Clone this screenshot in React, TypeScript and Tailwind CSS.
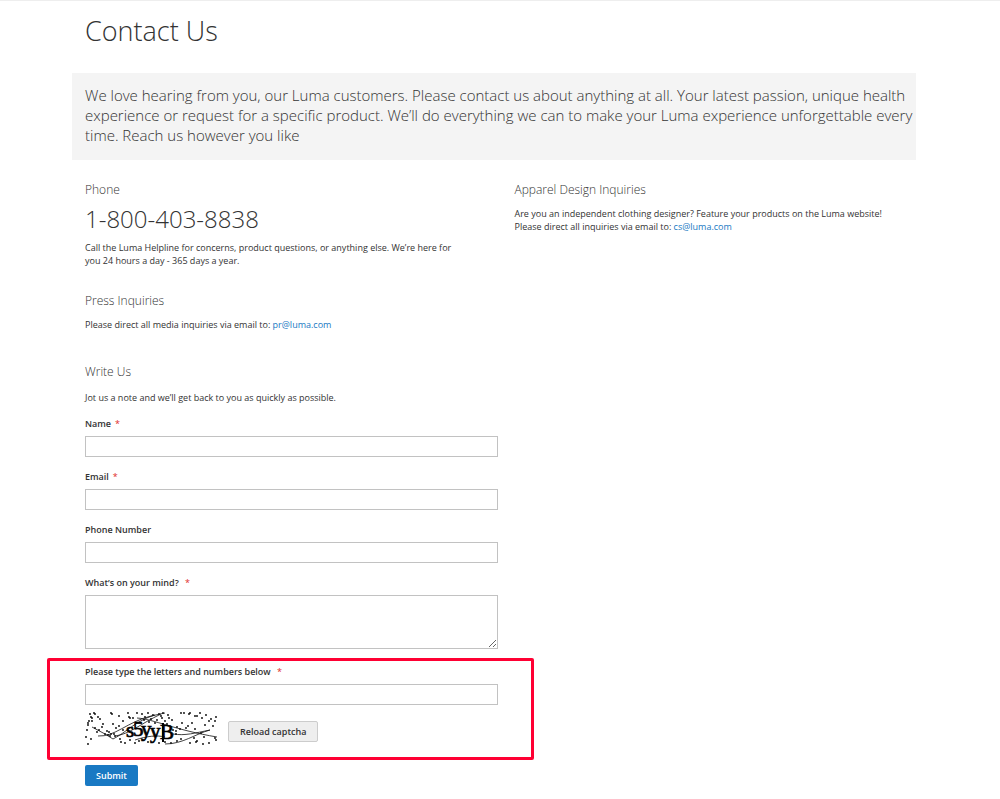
import { useState } from 'react';

const CAPTCHA_DOTS = [
  [5, 2], [9, 1], [10, 2], [13, 5], [15, 7], [6, 5], [7, 6], [4, 9], [3, 11], [7, 9], [18, 12], [26, 1], [27, 2], [34, 4],
  [43, 1], [44, 5], [45, 6], [52, 1], [57, 2], [28, 12], [38, 9], [3, 13], [10, 16], [2, 18], [17, 15], [24, 20], [31, 16],
  [1, 25], [6, 27], [12, 20], [22, 19], [3, 32], [36, 30], [40, 31], [35, 27], [45, 28], [50, 31], [63, 30], [14, 18],
  [26, 22], [20, 22], [23, 23], [25, 24], [29, 22], [30, 24], [34, 14], [38, 18], [54, 29], [48, 6], [59, 8],
  [63, 1], [68, 3], [74, 2], [78, 1], [84, 6], [83, 3], [87, 8], [96, 1], [99, 1], [104, 2], [105, 1], [110, 4], [115, 1],
  [121, 3], [126, 7], [131, 5], [117, 6], [112, 4], [124, 9], [130, 9], [120, 13], [128, 14], [107, 11], [97, 11], [92, 15],
  [88, 18], [91, 22], [95, 17], [103, 14], [110, 17], [116, 21], [91, 19], [130, 26], [101, 16], [119, 25], [109, 26], [96, 27],
  [92, 29], [105, 31], [111, 30], [112, 29], [118, 32], [124, 31], [131, 28], [86, 31], [80, 30], [74, 31], [58, 28], [66, 7],
  [72, 8], [77, 6], [80, 9], [70, 11], [64, 10], [82, 12], [76, 4], [60, 5],
];

const inputClass =
  'block h-[21px] w-full border border-[#c2c2c2] bg-white px-1.5 focus:outline-none focus:border-[#006bb4]';

function Captcha() {
  return (
    <svg width="132" height="33" viewBox="0 0 132 33" role="img" aria-label="Captcha">
      {CAPTCHA_DOTS.map(([x, y]) => (
        <circle key={`${x}-${y}`} cx={x} cy={y} r="0.9" />
      ))}
      <g fill="none" stroke="#111" strokeWidth="0.8">
        <path d="M13 24C30 25 42 10 66 4L80 1" />
        <path d="M7 15L20 22L28 27C42 20 50 9 70 3" />
        <path d="M30 24C45 22 55 12 76 2" />
        <path d="M52 6C68 7 90 18 132 25" />
        <path d="M50 28C62 24 72 23 80 25" />
        <path d="M80 32C98 32 110 22 125 18" />
        <path d="M88 22C100 24 110 21 125 18" />
      </g>
      <text
        x="41 48 56 65 75"
        y="25 24 24 26 27"
        fontFamily="Liberation Serif, serif"
        fontSize="21"
        stroke="#000"
        strokeWidth="0.7"
      >
        s5yyB
      </text>
      <path d="M78 11V30" stroke="#000" strokeWidth="2" />
    </svg>
  );
}

function Label({ id, text, required }: { id: string; text: string; required?: boolean }) {
  return (
    <label htmlFor={id} className="mb-[5px] block leading-[14px] font-semibold">
      {text}
      {required && <span className="ml-1 font-normal text-[#e02b27]">*</span>}
    </label>
  );
}

export default function App() {
  const [form, setForm] = useState({ name: '', email: '', phone: '', comment: '', captcha: '' });

  const update = (e: React.ChangeEvent<HTMLInputElement | HTMLTextAreaElement>) =>
    setForm({ ...form, [e.target.name]: e.target.value });

  return (
    <div className="border-t border-[#eee] bg-white font-['Open_Sans',sans-serif] text-[9px] leading-[13px] text-[#333]">
      <main className="mx-auto w-full max-w-[856px] pb-3">
        <h1 className="px-[13px] pt-3 text-[27px] leading-9 font-light">Contact Us</h1>

        <p className="mt-6 mr-3 bg-[#f4f4f4] pt-3 pb-[15px] pl-[13px] text-[15px] leading-5 font-light text-[#333]">
          We love hearing from you, our Luma customers. Please contact us about anything at all. Your latest passion,
          unique health experience or request for a specific product. We’ll do everything we can to make your Luma
          experience unforgettable every time. Reach us however you like
        </p>

        <div className="mt-5 grid grid-cols-2 gap-x-4 pl-[13px]">
          <div className="pr-8">
            <section className="mb-6">
              <h2 className="text-[12px] leading-5 font-light">Phone</h2>
              <p className="mt-[3px] mb-[6px] text-[24px] leading-8 font-light">1-800-403-8838</p>
              <p>
                Call the Luma Helpline for concerns, product questions, or anything else. We’re here for you 24 hours a
                day - 365 days a year.
              </p>
            </section>
            <section>
              <h2 className="mb-[7px] text-[12px] leading-5 font-light">Press Inquiries</h2>
              <p>
                Please direct all media inquiries via email to:{' '}
                <a href="mailto:pr@luma.com" className="text-[#1979c3] hover:underline">pr@luma.com</a>
              </p>
            </section>
          </div>
          <section className="pr-8">
            <h2 className="mb-[7px] text-[12px] leading-5 font-light">Apparel Design Inquiries</h2>
            <p>
              Are you an independent clothing designer? Feature your products on the Luma website!
              <br />
              Please direct all inquiries via email to:{' '}
              <a href="mailto:cs@luma.com" className="text-[#1979c3] hover:underline">cs@luma.com</a>
            </p>
          </section>
        </div>

        <form className="mt-[31px] ml-[13px] w-1/2 max-w-[413px]" onSubmit={e => e.preventDefault()}>
          <h2 className="text-[12px] leading-5 font-light">Write Us</h2>
          <p className="mt-[9px] mb-[13px]">Jot us a note and we’ll get back to you as quickly as possible.</p>

          <div className="mb-[13px]">
            <Label id="name" text="Name" required />
            <input id="name" name="name" type="text" value={form.name} onChange={update} className={inputClass} />
          </div>
          <div className="mb-[13px]">
            <Label id="email" text="Email" required />
            <input id="email" name="email" type="email" value={form.email} onChange={update} className={inputClass} />
          </div>
          <div className="mb-[13px]">
            <Label id="phone" text="Phone Number" />
            <input id="phone" name="phone" type="tel" value={form.phone} onChange={update} className={inputClass} />
          </div>
          <div className="mb-[9px]">
            <Label id="comment" text="What’s on your mind? " required />
            <textarea
              id="comment"
              name="comment"
              value={form.comment}
              onChange={update}
              className="block h-[54px] w-full resize-y border border-[#c2c2c2] px-1.5 py-1 focus:outline-none focus:border-[#006bb4]"
            />
          </div>

          {/* highlighted captcha block */}
          <div className="-mr-9 -ml-[38px] rounded-xs border-[3px] border-[#ff0033] pt-1 pr-[33px] pb-3 pl-[35px]">
            <Label id="captcha" text="Please type the letters and numbers below " required />
            <input id="captcha" name="captcha" type="text" value={form.captcha} onChange={update} className={inputClass} />
            <div className="mt-[7px] flex items-end gap-[11px]">
              <Captcha />
              <button
                type="button"
                className="mb-[3px] h-[21px] rounded-xs border border-[#ccc] bg-[#eee] px-[11px] font-semibold hover:bg-[#e1e1e1]"
              >
                Reload captcha
              </button>
            </div>
          </div>

          <button
            type="submit"
            className="mt-[5px] h-[21px] rounded-xs bg-[#1979c3] px-[11px] font-semibold text-white hover:bg-[#006bb4]"
          >
            Submit
          </button>
        </form>
      </main>
    </div>
  );
}
